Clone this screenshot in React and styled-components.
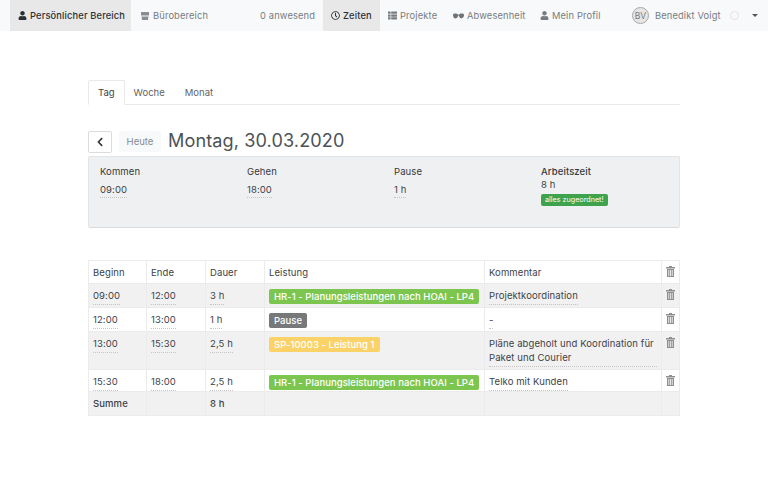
import React from 'react';
import styled, { createGlobalStyle } from 'styled-components';
import { FaUser, FaRegClock, FaThList, FaChevronLeft } from 'react-icons/fa';

const Global = createGlobalStyle`
  html, body { margin: 0; padding: 0; background: #fff; }
  body { font-family: Inter, "Open Sans", sans-serif; color: #3d4348; overflow: hidden; }
`;

const Nav = styled.nav`
  height: 31px;
  background: #f8f9fa;
  display: flex;
  align-items: stretch;
  padding-left: 10px;
  font-size: 9.3px;
  letter-spacing: 0.15px;
`;

const NavItem = styled.div`
  display: flex;
  align-items: center;
  gap: 3px;
  width: ${(p) => p.$w}px;
  padding-left: ${(p) => p.$pl}px;
  box-sizing: border-box;
  flex-shrink: 0;
  white-space: nowrap;
  font-weight: ${(p) => (p.$active ? 500 : 400)};
  color: ${(p) => (p.$active ? '#2c3035' : '#777c80')};
  background: ${(p) => (p.$active ? '#e8e8e8' : 'transparent')};
  svg { flex-shrink: 0; }
`;

const Avatar = styled.span`
  width: 17px;
  height: 17px;
  border: 1px solid #a8a8a8;
  border-radius: 50%;
  background: #e6e6e6;
  font-size: 8.5px;
  display: flex;
  align-items: center;
  justify-content: center;
  margin-right: 3px;
  box-sizing: border-box;
`;

const Spinner = styled.span`
  width: 7px;
  height: 7px;
  border-radius: 50%;
  border: 1px solid #e2e2e2;
  margin-left: 6px;
`;

const Caret = styled.span`
  width: 0;
  height: 0;
  border-left: 3px solid transparent;
  border-right: 3px solid transparent;
  border-top: 3px solid #555;
  margin-left: 10px;
`;

const Main = styled.main`
  width: 592px;
  margin: 49px 0 0 88px;
`;

const Tabs = styled.div`
  display: flex;
  height: 25px;
  box-sizing: border-box;
  border-bottom: 1px solid #e9e9e9;
  font-size: 9.5px;
`;

const Tab = styled.div`
  height: 25px;
  box-sizing: border-box;
  display: flex;
  align-items: center;
  padding: 0 ${(p) => p.$px}px;
  color: ${(p) => (p.$active ? '#3d4348' : '#5f6468')};
  border: 1px solid ${(p) => (p.$active ? '#e9e9e9' : 'transparent')};
  border-bottom-color: ${(p) => (p.$active ? '#fff' : 'transparent')};
  border-radius: 2px 2px 0 0;
`;

const TitleRow = styled.div`
  display: flex;
  align-items: center;
  height: 23px;
  margin-top: 25px;
`;

const BackButton = styled.div`
  width: 24px;
  height: 22px;
  box-sizing: border-box;
  border: 1px solid #dcdcdc;
  border-radius: 2px;
  display: flex;
  align-items: center;
  justify-content: center;
  color: #333;
`;

const TodayButton = styled.div`
  width: 42px;
  height: 21px;
  margin-left: 7px;
  background: #f8f9fa;
  border-radius: 2px;
  font-size: 9.5px;
  color: #878b8f;
  display: flex;
  align-items: center;
  justify-content: center;
`;

const Title = styled.h1`
  margin: 0 0 3px 7px;
  font-size: 18.1px;
  font-weight: 400;
  color: #4c5257;
  letter-spacing: 0.1px;
`;

const Panel = styled.section`
  margin-top: 3px;
  height: 72px;
  box-sizing: border-box;
  background: #eff0f2;
  border: 1px solid #e3e4e6;
  border-bottom: 1px solid #d8d9db;
  border-radius: 2px;
  display: grid;
  grid-template-columns: 147px 147px 147px 1fr;
  padding: 8px 0 0 11px;
  font-size: 9.5px;
  letter-spacing: 0.1px;
`;

const Label = styled.div`
  height: 13px;
  line-height: 13px;
  color: #34393d;
  font-weight: ${(p) => (p.$strong ? 500 : 400)};
`;

const Value = styled.div`
  height: 13px;
  line-height: 13px;
  margin-top: ${(p) => p.$mt}px;
`;

const Editable = styled.span`
  display: inline-block;
  border-bottom: 1px dotted #c4c4c4;
  padding-bottom: 1px;
`;

const GreenTag = styled.span`
  display: inline-block;
  margin-top: 3px;
  padding: 0 4px;
  height: 12px;
  line-height: 12px;
  background: #3fa24c;
  color: #fff;
  border-radius: 2px;
  font-size: 7.2px;
  letter-spacing: 0;
`;

const Table = styled.table`
  margin-top: 32px;
  width: 591px;
  table-layout: fixed;
  border-collapse: collapse;
  font-size: 9.5px;
  letter-spacing: 0.1px;
  color: #3d4348;
`;

const Row = styled.tr`
  height: ${(p) => p.$h}px;
  background: ${(p) => (p.$shade ? '#f1f1f1' : '#fff')};
`;

const Cell = styled.td`
  border: 1px solid #ebebeb;
  padding: 5px 4px 0 4px;
  vertical-align: top;
  line-height: 14px;
  font-weight: ${(p) => (p.$strong ? 500 : 400)};
  text-align: ${(p) => (p.$center ? 'center' : 'left')};
`;

const Tag = styled.span`
  display: inline-block;
  height: 15px;
  line-height: 15px;
  padding: 0 5px;
  border-radius: 2px;
  color: #fff;
  font-weight: 500;
  letter-spacing: 0.05px;
  white-space: nowrap;
  background: ${(p) => p.$bg};
`;

// Büro-Symbol in der Navigation
const OfficeIcon = () => (
  <svg width="10" height="10" viewBox="0 0 10 10" fill="#8a8e92">
    <path d="M1 1h8v3.5H1zM1.5 5.5h7L8 9H2z" />
  </svg>
);

const GlassesIcon = () => (
  <svg width="11" height="8" viewBox="0 0 11 8" fill="#6f7478">
    <path d="M0 3.2C0 2 1 1.6 2.5 1.6S5 2.2 5 3.6 4.2 6.4 2.6 6.4 0 5 0 3.2zM6 3.6C6 2.2 7 1.6 8.5 1.6S11 2 11 3.2 10 6.4 8.4 6.4 6 5 6 3.6z" />
    <rect x="4" y="2.6" width="3" height="1" />
  </svg>
);

const TrashSvg = styled.svg`
  display: block;
  margin: 0 auto;
`;

const TrashIcon = () => (
  <TrashSvg width="9" height="11" viewBox="0 0 9 11" fill="#8e8e8e">
    <path d="M3 0h3v1h3v1.4H0V1h3z" />
    <path d="M1 3h7v8H1zM2.4 4v6h.8V4zM4.1 4v6h.8V4zM5.8 4v6h.8V4z" fillRule="evenodd" />
  </TrashSvg>
);

const rows = [
  { from: '09:00', to: '12:00', dur: '3 h', tag: 'HR-1 - Planungsleistungen nach HOAI - LP4', bg: '#7cc650', note: 'Projektkoordination', h: 24, shade: true },
  { from: '12:00', to: '13:00', dur: '1 h', tag: 'Pause', bg: '#77787a', note: '-', h: 24 },
  { from: '13:00', to: '15:30', dur: '2,5 h', tag: 'SP-10003 - Leistung 1', bg: '#fbd267', note: 'Pläne abgeholt und Koordination für Paket und Courier', h: 38, shade: true },
  { from: '15:30', to: '18:00', dur: '2,5 h', tag: 'HR-1 - Planungsleistungen nach HOAI - LP4', bg: '#7cc650', note: 'Telko mit Kunden', h: 22 },
];

export default function App() {
  return (
    <>
      <Global />
      <Nav>
        <NavItem $active $w={121} $pl={8}><FaUser size={9} />Persönlicher Bereich</NavItem>
        <NavItem $w={129} $pl={9}><OfficeIcon />Bürobereich</NavItem>
        <NavItem $w={63} $pl={0}>0 anwesend</NavItem>
        <NavItem $active $w={57} $pl={8}><FaRegClock size={9} />Zeiten</NavItem>
        <NavItem $w={65} $pl={8}><FaThList size={9} />Projekte</NavItem>
        <NavItem $w={88} $pl={8}><GlassesIcon />Abwesenheit</NavItem>
        <NavItem $w={99} $pl={7}><FaUser size={9} />Mein Profil</NavItem>
        <NavItem $w={136} $pl={0}>
          <Avatar>BV</Avatar>Benedikt Voigt<Spinner /><Caret />
        </NavItem>
      </Nav>
      <Main>
        <Tabs>
          <Tab $active $px={9}>Tag</Tab>
          <Tab $px={8}>Woche</Tab>
          <Tab $px={10}>Monat</Tab>
        </Tabs>
        <TitleRow>
          <BackButton><FaChevronLeft size={10} /></BackButton>
          <TodayButton>Heute</TodayButton>
          <Title>Montag, 30.03.2020</Title>
        </TitleRow>
        <Panel>
          <div><Label>Kommen</Label><Value $mt={5}><Editable>09:00</Editable></Value></div>
          <div><Label>Gehen</Label><Value $mt={5}><Editable>18:00</Editable></Value></div>
          <div><Label>Pause</Label><Value $mt={5}><Editable>1 h</Editable></Value></div>
          <div>
            <Label $strong>Arbeitszeit</Label>
            <Value $mt={0}>8 h</Value>
            <GreenTag>alles zugeordnet!</GreenTag>
          </div>
        </Panel>
        <Table>
          <colgroup>
            <col width="58" /><col width="59" /><col width="59" /><col width="220" /><col width="177" /><col width="18" />
          </colgroup>
          <tbody>
            <Row $h={23}>
              <Cell>Beginn</Cell><Cell>Ende</Cell><Cell>Dauer</Cell><Cell>Leistung</Cell><Cell>Kommentar</Cell>
              <Cell $center><TrashIcon /></Cell>
            </Row>
            {rows.map((r) => (
              <Row key={r.from} $h={r.h} $shade={r.shade}>
                <Cell><Editable>{r.from}</Editable></Cell>
                <Cell><Editable>{r.to}</Editable></Cell>
                <Cell><Editable>{r.dur}</Editable></Cell>
                <Cell><Tag $bg={r.bg}>{r.tag}</Tag></Cell>
                <Cell><Editable>{r.note}</Editable></Cell>
                <Cell $center><TrashIcon /></Cell>
              </Row>
            ))}
            <Row $h={24} $shade>
              <Cell $strong>Summe</Cell><Cell /><Cell $strong>8 h</Cell><Cell /><Cell /><Cell />
            </Row>
          </tbody>
        </Table>
      </Main>
    </>
  );
}
